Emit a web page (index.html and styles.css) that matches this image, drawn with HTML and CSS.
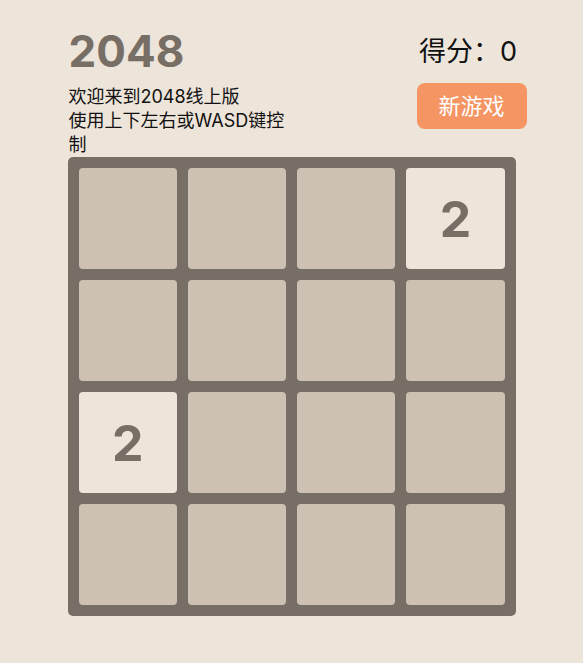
FILE: index.html
```html
<!DOCTYPE html>
<html lang="zh-CN">
<head>
    <meta charset="UTF-8">
    <meta name="viewport" content="width=device-width, initial-scale=1.0">
    <title>2048</title>
    <link rel="stylesheet" href="styles.css">
</head>
<body>
    <div class="container">
        <div class="header">
            <div class="intro">
                <h1 class="title">2048</h1>
                <p class="desc">欢迎来到2048线上版<br>使用上下左右或WASD键控制</p>
            </div>
            <div class="side">
                <div class="score">得分：<span id="score">0</span></div>
                <button class="new-game">新游戏</button>
            </div>
        </div>

        <div class="board">
            <div class="cell"></div>
            <div class="cell"></div>
            <div class="cell"></div>
            <div class="cell tile-2">2</div>
            <div class="cell"></div>
            <div class="cell"></div>
            <div class="cell"></div>
            <div class="cell"></div>
            <div class="cell tile-2">2</div>
            <div class="cell"></div>
            <div class="cell"></div>
            <div class="cell"></div>
            <div class="cell"></div>
            <div class="cell"></div>
            <div class="cell"></div>
            <div class="cell"></div>
        </div>
    </div>
</body>
</html>
```

FILE: styles.css
```css
* {
    margin: 0;
    padding: 0;
    box-sizing: border-box;
    font-family: Inter, "Noto Sans CJK SC", sans-serif;
}

body {
    background-color: #ede4da;
    color: #111;
}

.container {
    width: 448px;
    margin: 0 auto;
}

.header {
    display: flex;
    justify-content: space-between;
    align-items: flex-start;
    padding-top: 23px;
}

.intro {
    width: 230px;
}

.title {
    font-size: 44px;
    line-height: 56px;
    font-weight: bold;
    color: #776e65;
    padding-left: 1px;
}

.desc {
    margin-top: 6px;
    font-size: 18px;
    line-height: 24px;
    padding-left: 1px;
}

.side {
    display: flex;
    flex-direction: column;
    align-items: center;
    width: 110px;
    margin-right: -11px;
    margin-top: 11px;
}

.score {
    font-size: 27px;
    line-height: 36px;
    margin-right: 7px;
}

.new-game {
    margin-top: 13px;
    width: 110px;
    height: 46px;
    border: none;
    border-radius: 8px;
    background-color: #f59563;
    color: white;
    font-size: 22px;
    line-height: 46px;
    cursor: pointer;
}

.new-game:hover {
    background-color: #f68a52;
}

.board {
    display: grid;
    grid-template-columns: repeat(4, 1fr);
    grid-auto-rows: 101px;
    gap: 11px;
    padding: 11px;
    background-color: #776e65;
    border-radius: 5px;
}

.cell {
    display: flex;
    justify-content: center;
    align-items: center;
    background-color: #cdc1b4;
    border-radius: 4px;
    font-size: 50px;
    font-weight: bold;
    color: #776e65;
}

.tile-2 {
    background-color: #eee4da;
}
```
